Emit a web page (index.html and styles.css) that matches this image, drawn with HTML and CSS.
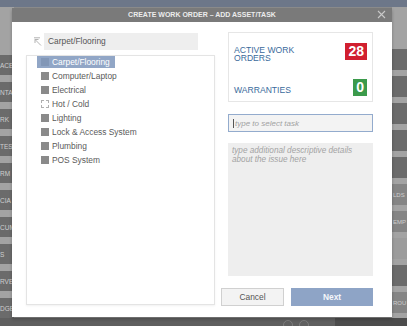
FILE: index.html
```html
<!DOCTYPE html>
<html lang="en">
<head>
    <meta charset="UTF-8">
    <meta name="viewport" content="width=device-width, initial-scale=1.0">
    <title>Create Work Order</title>
    <link rel="stylesheet" href="styles.css">
</head>
<body>
    <div class="app">
        <div class="topbar"></div>
        <div class="workspace">
            <div class="rail rail-left">
                <div class="tile">ACE</div>
                <div class="tile">NTA</div>
                <div class="tile">RK</div>
                <div class="tile">TES</div>
                <div class="tile">RM</div>
                <div class="tile">CIA</div>
                <div class="tile">CUM</div>
                <div class="tile">S</div>
                <div class="tile">RVE</div>
                <div class="tile">DGE</div>
            </div>
            <div class="canvas"></div>
            <div class="rail rail-right">
                <div class="tile"></div>
                <div class="tile"></div>
                <div class="tile"></div>
                <div class="tile"></div>
                <div class="tile"></div>
                <div class="tile light">LDS</div>
                <div class="tile light">EMP</div>
                <div class="tile pale"></div>
                <div class="tile"></div>
                <div class="tile light">ROU</div>
            </div>
        </div>
        <div class="footer">
            <span class="ring"></span>
            <span class="ring"></span>
            <span class="footer-dark"></span>
        </div>
    </div>

    <div class="modal">
        <div class="modal-head">
            CREATE WORK ORDER &ndash; ADD ASSET/TASK
            <svg class="close" width="9" height="9" viewBox="0 0 9 9">
                <path d="M1 1L8 8M8 1L1 8" stroke="#c9c9c9" stroke-width="1.1" fill="none"/>
            </svg>
        </div>
        <div class="modal-body">
            <div class="col-left">
                <div class="search-row">
                    <svg class="up-icon" width="9" height="9" viewBox="0 0 9 9">
                        <path d="M1 0.8H7M2 2.5L8 8.5M2 2.5V6M2 2.5H5.5" stroke="#b3b3b3" stroke-width="1" fill="none"/>
                    </svg>
                    <div class="search-box">Carpet/Flooring</div>
                </div>
                <div class="tree">
                    <div class="tree-item selected"><span class="sq"></span>Carpet/Flooring</div>
                    <div class="tree-item"><span class="sq"></span>Computer/Laptop</div>
                    <div class="tree-item"><span class="sq"></span>Electrical</div>
                    <div class="tree-item"><span class="sq empty"></span>Hot / Cold</div>
                    <div class="tree-item"><span class="sq"></span>Lighting</div>
                    <div class="tree-item"><span class="sq"></span>Lock &amp; Access System</div>
                    <div class="tree-item"><span class="sq"></span>Plumbing</div>
                    <div class="tree-item"><span class="sq"></span>POS System</div>
                </div>
            </div>
            <div class="col-right">
                <div class="stats">
                    <div class="stat-row">
                        <span class="stat-label">ACTIVE WORK<br>ORDERS</span>
                        <span class="badge red">28</span>
                    </div>
                    <div class="stat-row">
                        <span class="stat-label">WARRANTIES</span>
                        <span class="badge green">0</span>
                    </div>
                </div>
                <div class="task-input"><span class="caret"></span>type to select task</div>
                <div class="details">type additional descriptive details<br>about the issue here</div>
                <div class="actions">
                    <div class="btn cancel">Cancel</div>
                    <div class="btn next">Next</div>
                </div>
            </div>
        </div>
    </div>
</body>
</html>
```

FILE: styles.css
```css
body {
    margin: 0;
    width: 407px;
    height: 326px;
    overflow: hidden;
    font-family: "Liberation Sans", Arial, sans-serif;
    background-color: #8b8b8b;
}

.app {
    display: flex;
    flex-direction: column;
    height: 326px;
}

.topbar {
    height: 8px;
    background-color: #6d7789;
}

.workspace {
    flex: 1;
    display: flex;
    background-color: #8c8c8c;
}

.rail {
    display: flex;
    flex-direction: column;
    gap: 7px;
    padding-top: 48px;
    background-color: #a3a3a3;
    overflow: hidden;
    flex-shrink: 0;
}

.rail-left {
    width: 14px;
}

.rail-right {
    width: 15px;
    gap: 6px;
    padding-top: 42px;
}

.tile {
    height: 20px;
    flex-shrink: 0;
    display: flex;
    align-items: center;
    background-color: #6b6b6b;
    color: #cfcfcf;
    font-size: 6.5px;
    white-space: nowrap;
}

.rail-right .tile {
    height: 21px;
    padding-left: 1px;
    font-size: 6px;
}

.tile.light {
    background-color: #858585;
}

.tile.pale {
    background-color: #9c9c9c;
}

.canvas {
    flex: 1;
}

.footer {
    height: 8px;
    display: flex;
    align-items: center;
    gap: 6px;
    padding-left: 283px;
    background-color: #5f5f5f;
}

.ring {
    width: 10px;
    height: 10px;
    border: 1px solid #7c7c7c;
    border-radius: 50%;
    box-sizing: border-box;
    margin-top: 6px;
}

.footer-dark {
    flex: 1;
    align-self: stretch;
    margin-left: 20px;
    background-color: #4c4c4c;
}

/* modal */
.modal {
    position: absolute;
    left: 12px;
    top: 8px;
    width: 380px;
    height: 309px;
    display: flex;
    flex-direction: column;
    background-color: #fff;
    box-shadow: 0 2px 3px rgba(0, 0, 0, 0.25);
}

.modal-head {
    position: relative;
    height: 14px;
    line-height: 14px;
    text-align: center;
    background-color: #7a7a7a;
    color: #ececec;
    font-size: 7px;
    font-weight: bold;
}

.close {
    position: absolute;
    right: 6px;
    top: 2px;
}

.modal-body {
    flex: 1;
    display: flex;
    gap: 13px;
    padding: 10px 19px 11px 14px;
}

.col-left {
    width: 189px;
    display: flex;
    flex-direction: column;
}

.search-row {
    display: flex;
    align-items: center;
    height: 17px;
    margin-top: 1px;
}

.up-icon {
    margin-left: 5px;
    width: 13px;
}

.search-box {
    width: 150px;
    height: 17px;
    line-height: 17px;
    padding-left: 4px;
    background-color: #eeeeee;
    color: #555;
    font-size: 8.4px;
}

.tree {
    flex: 1;
    margin-top: 5px;
    margin-bottom: 1px;
    padding-left: 10px;
    border: 1px solid #e4e4e4;
    box-shadow: 0 1px 2px rgba(0, 0, 0, 0.06);
}

.tree-item {
    display: flex;
    align-items: center;
    width: max-content;
    height: 12px;
    margin-bottom: 2px;
    padding: 0 4px;
    gap: 3px;
    color: #5a5a5a;
    font-size: 8.4px;
}

.tree-item.selected {
    background-color: #91a6c6;
    color: #fff;
    padding-right: 5px;
}

.sq {
    width: 8px;
    height: 8px;
    background-color: #8a8a8a;
}

.selected .sq {
    background-color: #8297b7;
}

.sq.empty {
    box-sizing: border-box;
    background-color: #fff;
    border: 1px dashed #b0b0b0;
}

.col-right {
    width: 145px;
    display: flex;
    flex-direction: column;
}

.stats {
    height: 70px;
    box-sizing: border-box;
    padding: 10px 5px 5px 5px;
    border: 1px solid #e6e6e6;
    display: flex;
    flex-direction: column;
    gap: 19px;
}

.stat-row {
    display: flex;
    align-items: center;
    justify-content: space-between;
    height: 17px;
}

.stat-label {
    color: #3a6a9b;
    font-size: 8.6px;
    line-height: 8.5px;
    padding-top: 5px;
}

.badge {
    height: 17px;
    line-height: 17px;
    padding: 0 3px;
    color: #fff;
    font-size: 14px;
    font-weight: bold;
}

.badge.red {
    background-color: #d11f2f;
}

.badge.green {
    background-color: #3b9a4b;
}

.task-input {
    height: 18px;
    margin-top: 12px;
    box-sizing: border-box;
    padding-left: 4px;
    display: flex;
    align-items: center;
    border: 1px solid #93abcd;
    background-color: #f3f3f3;
    color: #a2a2a2;
    font-size: 8px;
    font-style: italic;
}

.caret {
    width: 1px;
    height: 9px;
    margin-right: 1px;
    background-color: #555;
}

.details {
    height: 133px;
    margin-top: 11px;
    box-sizing: border-box;
    padding: 4px;
    background-color: #eeeeee;
    color: #a3a3a3;
    font-size: 8.2px;
    line-height: 8.5px;
    font-style: italic;
}

.actions {
    display: flex;
    gap: 7px;
    height: 18px;
    margin-top: 12px;
    margin-left: -7px;
}

.btn {
    display: flex;
    align-items: center;
    justify-content: center;
    box-sizing: border-box;
    font-size: 8.4px;
}

.cancel {
    width: 63px;
    border: 1px solid #d0d0d0;
    background-color: #f3f3f3;
    color: #555;
}

.next {
    flex: 1;
    background-color: #8ea4c6;
    color: #f4f6fa;
    font-weight: bold;
}
```
